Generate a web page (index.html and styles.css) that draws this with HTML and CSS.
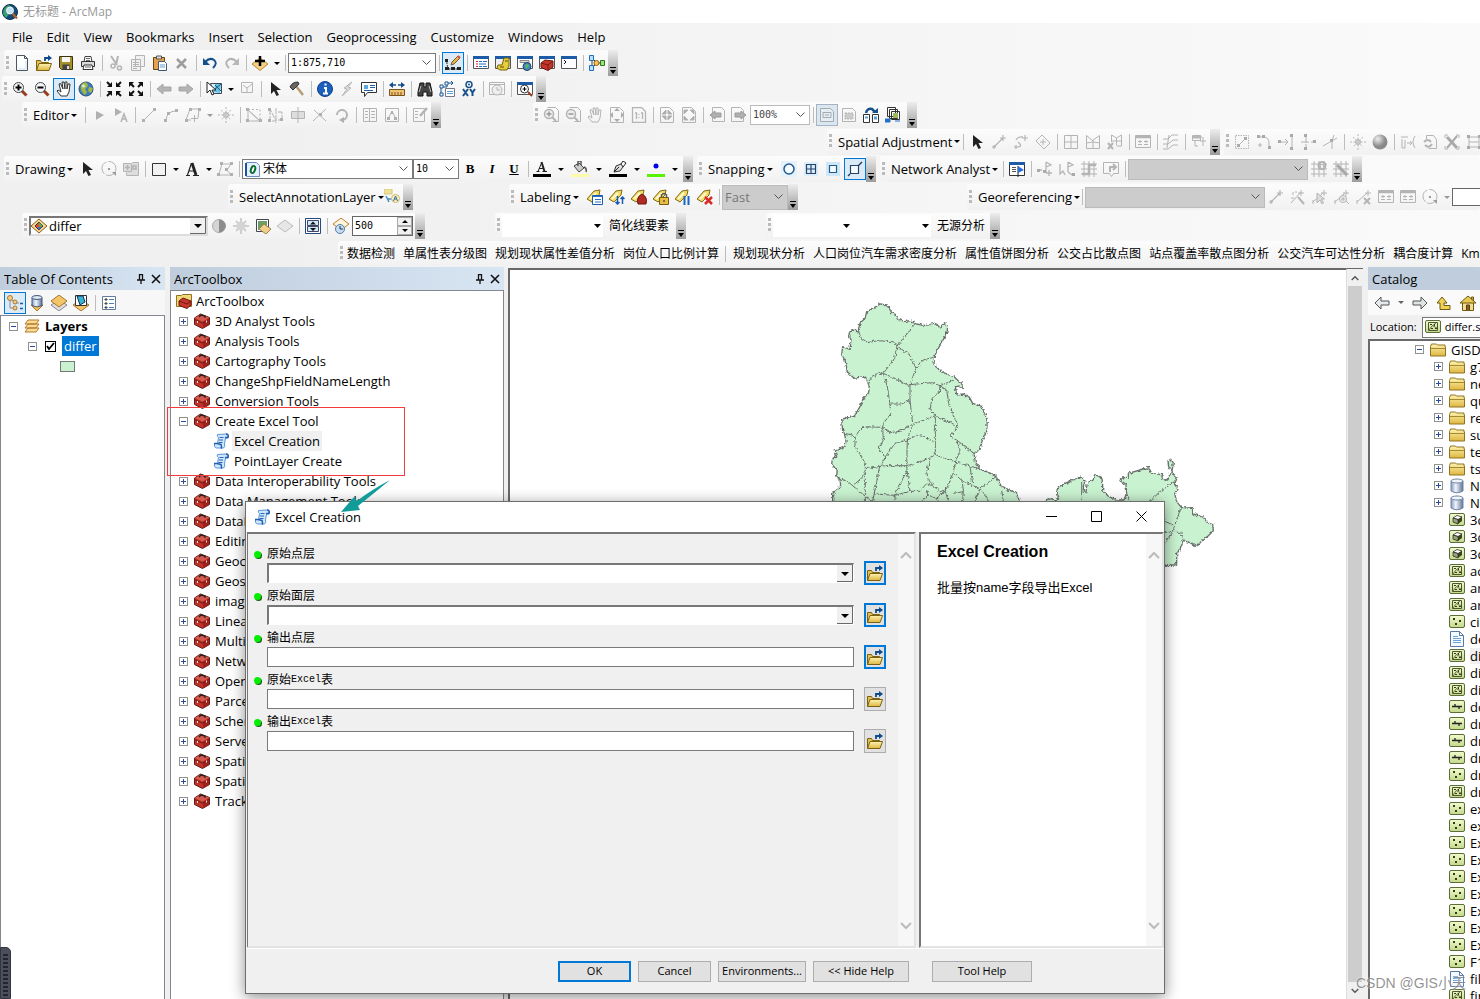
FILE: index.html
```html
<!DOCTYPE html>
<html lang="zh-CN">
<head>
<meta charset="utf-8">
<title>无标题 - ArcMap</title>
<link rel="stylesheet" href="styles.css">
</head>
<body>
<svg class="sprite" aria-hidden="true">
<defs>
<linearGradient id="gy" x2="0" y2="1"><stop stop-color="#fdf3b0"/><stop offset="1" stop-color="#dfb640"/></linearGradient>
<linearGradient id="gcyl"><stop stop-color="#7f9cc4"/><stop offset=".4" stop-color="#f1f6fc"/><stop offset="1" stop-color="#5c7299"/></linearGradient>
<linearGradient id="ggrn" x2="0" y2="1"><stop stop-color="#f3fbcf"/><stop offset="1" stop-color="#c3d98a"/></linearGradient>
<radialGradient id="gball" cx=".35" cy=".3"><stop stop-color="#eee"/><stop offset="1" stop-color="#8a8a8a"/></radialGradient>
<filter id="rough" x="-5%" y="-5%" width="110%" height="110%"><feTurbulence type="fractalNoise" baseFrequency=".12" numOctaves="2" seed="4"/><feDisplacementMap in="SourceGraphic" scale="12" xChannelSelector="R" yChannelSelector="G"/></filter>
</defs>
<symbol id="app" viewBox="0 0 16 16"><circle cx="8" cy="8" r="7.500" fill="#164a78" stroke="#0b2f52"/><path d="M1 10q0-7 6-9l3 2-2 6-4 5Z" fill="#3aa070" stroke="none"/><circle cx="8" cy="6.500" r="3.500" fill="#bfe3f5" stroke="#eef4f8"/><path d="m10.500 9.500 4.500 5" stroke="#b5622a" stroke-width="2.200"/></symbol>
<symbol id="new" viewBox="0 0 16 16"><path d="M2.500.5h8l3 3v12h-11Z" fill="#fdfeff" stroke="#4d5560"/><path d="M10.500.5v3h3" stroke="#4d5560"/><path d="M4 14h8V6" stroke="#cfe0f4"/></symbol>
<symbol id="open" viewBox="0 0 16 16"><path d="M.5 15.500V5.500h4l1 2h7v2" fill="#e2c052" stroke="#7a6212"/><path d="m.5 15.500 2.500-7h12.500l-2.500 7Z" fill="url(#gy)" stroke="#7a6212"/><path d="M9 6V3h4" stroke="#0c4a8c" stroke-width="1.800"/><path d="m12 0 4 3-4 3Z" fill="#0c4a8c" stroke="none"/></symbol>
<symbol id="save" viewBox="0 0 16 16"><path d="M1.500 1.500h13v13h-11l-2-2Z" fill="#a78f2c" stroke="#3b3410"/><path d="M4 2h8v5H4Z" fill="#f6f6f2" stroke="none"/><path d="M4.500 9.500h7v5h-7Z" fill="#444" stroke="none"/><path d="M9 11h2v3H9Z" fill="#ddd" stroke="none"/></symbol>
<symbol id="print" viewBox="0 0 16 16"><path d="M4 7 5 1.500h6L12 7" fill="#fff" stroke="#444"/><path d="M1.500 6.500h13v5h-13Z" fill="#d9d9d9" stroke="#333"/><path d="M4 10h8l1 4.500H3Z" fill="#fff" stroke="#333"/><path d="M6 3.500h4M6 5.500h4M5 12h6" stroke="#666"/></symbol>
<symbol id="cut" viewBox="0 0 16 16"><path d="m3 1 6 9M10 1 8 10" stroke-width="2"/><circle cx="5" cy="11" r="2" stroke-width="1.500"/><circle cx="11.500" cy="13" r="2" stroke-width="1.500"/></symbol>
<symbol id="copy" viewBox="0 0 16 16"><path d="M5.500.5h9v11h-9ZM1.500 4.500h9v11h-9Z" fill="#f0f0f0"/><path d="M3 7.500h6M3 9.500h6M3 11.500h6M3 13.500h4"/></symbol>
<symbol id="paste" viewBox="0 0 16 16"><path d="M1.500 2.500h11v12h-11Z" fill="#e6a34c" stroke="#6b4512"/><path d="M4.500 1h5v3h-5Z" fill="#ddd" stroke="#555"/><path d="M6.500 6.500h6l2 2v7h-8Z" fill="#fff" stroke="#3e5876"/><path d="M8 10h5M8 12h5" stroke="#5e98d0"/></symbol>
<symbol id="del" viewBox="0 0 16 16"><path d="m3 4 9 9M12 4l-9 9" stroke="#9c9c9c" stroke-width="2.500"/></symbol>
<symbol id="undo" viewBox="0 0 16 16"><path d="M3 7q5-5 9-2t-1 8" stroke="#14508c" stroke-width="2"/><path d="M1 3v7h7Z" fill="#14508c" stroke="none"/></symbol>
<symbol id="redo" viewBox="0 0 16 16"><path d="M13 7Q8 2 4 5t1 8" stroke-width="2"/><path d="M15 3v7H8Z" fill="#b8b8b8" stroke="none"/></symbol>
<symbol id="add" viewBox="0 0 16 16"><path d="m0 9 8-6 8 6-8 6.500Z" fill="#f3cf84" stroke="#b98a35"/><path d="M8 1v10M3 6h10" stroke="#000" stroke-width="2.500"/></symbol>
<symbol id="edtool" viewBox="0 0 16 16"><path d="M1.500 6q1 4 1 8h11" stroke="#222" stroke-dasharray="3 1"/><path d="M0 4h3v3H0ZM0 12h4v3H0ZM6 12h4v3H6ZM12 12h4v3h-4Z" fill="#222" stroke="none"/><path d="m6 10 1-3 6-6 2 2-6 6Z" fill="#e9b34b" stroke="#7b5a2b"/><path d="m13 1 2 2" stroke="#d0504a" stroke-width="2"/></symbol>
<symbol id="wlist" viewBox="0 0 16 16"><path d="M.5 1.500h15v12H.5Z" fill="#fff" stroke="#555"/><path d="M0 1h16v3H0Z" fill="#1c5ba5" stroke="none"/><path d="M3 6.500h2M3 9h2M3 11.500h2" stroke="#c22"/><path d="M6 6.500h3m1 0h4M6 9h7M6 11.500h3m1 0h4" stroke="#2471c8"/></symbol>
<symbol id="wcat" viewBox="0 0 16 16"><path d="M.5 1.500h15v12H.5Z" fill="#eee" stroke="#555"/><path d="M0 1h16v3H0Z" fill="#1c5ba5" stroke="none"/><path d="M9 3h5v8l-2 4H5l-3-2 1-3h4Z" fill="#e8cd3b" stroke="#74620e"/><path d="M10 6h3M5 12h4" stroke="#5b4d0a"/></symbol>
<symbol id="wglobe" viewBox="0 0 16 16"><path d="M.5 1.500h15v12H.5Z" fill="#fff" stroke="#555"/><path d="M0 1h16v3H0Z" fill="#1c5ba5" stroke="none"/><path d="M3 5.500h9v2H3Z" fill="#ddd" stroke="#888"/><circle cx="10" cy="11.500" r="4" fill="#3c86c9" stroke="#245"/><path d="m8 10 3-1 1 2-3 3Z" fill="#63b15d" stroke="none"/></symbol>
<symbol id="wbox" viewBox="0 0 16 16"><path d="M.5 1.500h15v12H.5Z" fill="#fff" stroke="#555"/><path d="M0 1h16v3H0Z" fill="#1c5ba5" stroke="none"/><path d="m2 8 4-3 8 1v6l-5 3.500-7-3Z" fill="#c3342b" stroke="#6c1512"/><path d="m2 8 7 2 5-4M9 10v5" stroke="#7a1a15"/></symbol>
<symbol id="wcmd" viewBox="0 0 16 16"><path d="M.5 1.500h15v12H.5Z" fill="#fdfdff" stroke="#555"/><path d="M0 1h16v3H0Z" fill="#1c5ba5" stroke="none"/><path d="m3 5 2 2-2 2" stroke="#111"/></symbol>
<symbol id="model" viewBox="0 0 16 16"><path d="M3 3v10M3 3l5 5M3 13l5-5h5" stroke="#345"/><path d="M.5.5h4v5h-4ZM.5 10.500h4v5h-4Z" fill="#bfe0fa" stroke="#1c6fc0"/><circle cx="7.500" cy="8" r="2.500" fill="#f7c65a" stroke="#96640e"/><path d="M11.500 5.500h4v5h-4Z" fill="#9adf80" stroke="#2c7a1c"/></symbol>
<symbol id="zin" viewBox="0 0 16 16"><path d="m10 10 4.500 4.500" stroke="#9a3b1f" stroke-width="3"/><circle cx="6.500" cy="6.500" r="5" fill="#f4f8fa" stroke="#444"/><path d="M3.500 6.500h6M6.500 3.500v6" stroke="#000" stroke-width="2"/></symbol>
<symbol id="zout" viewBox="0 0 16 16"><path d="m10 10 4.500 4.500" stroke="#9a3b1f" stroke-width="3"/><circle cx="6.500" cy="6.500" r="5" fill="#f4f8fa" stroke="#444"/><path d="M3.500 6.500h6" stroke="#000" stroke-width="2"/></symbol>
<symbol id="hand" viewBox="0 0 16 16"><path d="M5 15 1 10l1-1 3 2-2-8 1.500-.5L7 8 6 1h2l1 7V1h2v7l1-5h2l-1 8-2 4Z" fill="#fff" stroke="#333"/></symbol>
<symbol id="ghand" viewBox="0 0 16 16"><path d="M5 15 1 10l1-1 3 2-2-8 1.500-.5L7 8 6 1h2l1 7V1h2v7l1-5h2l-1 8-2 4Z"/></symbol>
<symbol id="globe" viewBox="0 0 16 16"><circle cx="8" cy="8" r="7" fill="#3f7dc0" stroke="#285080"/><path d="M3 4q3-4 6-2l1 3-3 3 2 3-2 3Q2 10 3 4ZM11 6l4 1-2 5-3-2Z" fill="#a6b93f" stroke="none"/><circle cx="5.500" cy="5" r="1.500" fill="#dce8f4" stroke="none"/></symbol>
<symbol id="shrink" viewBox="0 0 16 16"><path d="m1 1 4 4M15 1l-4 4M1 15l4-4M15 15l-4-4" stroke="currentColor" stroke-width="2"/><path d="M6 1v5H1ZM10 1v5h5ZM6 15v-5H1ZM10 15v-5h5Z" fill="currentColor" stroke="none"/></symbol>
<symbol id="grow" viewBox="0 0 16 16"><path d="m2 2 4 4M14 2l-4 4M2 14l4-4M14 14l-4-4" stroke="currentColor" stroke-width="2"/><path d="M1 6V1h5ZM15 6V1h-5ZM1 10v5h5ZM15 10v5h-5Z" fill="currentColor" stroke="none"/></symbol>
<symbol id="left" viewBox="0 0 16 16"><path d="m1 8 6-5v3h8v4H7v3Z" fill="#b4b4b4" stroke="#a5a5a5"/></symbol>
<symbol id="right" viewBox="0 0 16 16"><path d="M15 8 9 3v3H1v4h8v3Z" fill="#b4b4b4" stroke="#a5a5a5"/></symbol>
<symbol id="self" viewBox="0 0 16 16"><path d="M4.500 2.500h11v10h-8Z" fill="#d8f0fa" stroke="#445"/><path d="m9 3 6 0-1 9-6-1Z" fill="#5ec5e8" stroke="none"/><path d="m8 9 7-6M9 4l6 6" stroke="#29506a"/><path d="M1 1v11l3-3 2 5 2-1-2-4h4Z" fill="#fff" stroke="#222"/></symbol>
<symbol id="clr" viewBox="0 0 16 16"><path d="M2.500 1.500h11v10h-11ZM4 4l4 3 5-4M8 7v5"/></symbol>
<symbol id="ptr" viewBox="0 0 16 16"><path d="M4 1v12l3-3 2.500 5 2.500-1-2.500-5H14Z" fill="#222" stroke="none"/></symbol>
<symbol id="hammer" viewBox="0 0 16 16"><path d="m7 5 7 9" stroke="#b79b72" stroke-width="2.500"/><path d="M1 6q2-5 8-5l1 2-6 6Z" fill="#666" stroke="#333"/></symbol>
<symbol id="info" viewBox="0 0 16 16"><circle cx="8" cy="8" r="7.500" fill="#1d5fbd" stroke="#123f86"/><path d="M7 7h2v5M6 12.500h5M7.500 3.500h2" stroke="#fff" stroke-width="2"/></symbol>
<symbol id="bolt" viewBox="0 0 16 16"><path d="m13 1-8 6 3 1-5 7 9-8-3-1Z" fill="#ddd"/></symbol>
<symbol id="html" viewBox="0 0 16 16"><path d="M.5 1.500h15v10h-9l-3 4v-4h-3Z" fill="#fff" stroke="#333"/><path d="M3 4h4v4H3Z" fill="#5da8dc" stroke="none"/><path d="M9 4.500h5M9 6.500h5M3 9.500h9" stroke="#1d5fa5"/></symbol>
<symbol id="measure" viewBox="0 0 16 16"><path d="M.5 8.500h15v6H.5Z" fill="#f0c376" stroke="#7a5418"/><path d="M3 11v3M6 11v3M9 11v3M12 11v3" stroke="#7a5418"/><path d="M2 4h5M9 4h5" stroke="#154d8c" stroke-width="1.500"/><path d="M0 4 4 1v6ZM16 4l-4-3v6Z" fill="#154d8c" stroke="none"/></symbol>
<symbol id="find" viewBox="0 0 16 16"><path d="M3 2h4v4h2V2h4l2 9v4h-5v-4H6v4H1v-4Z" fill="#444" stroke="#111"/><path d="m4 5-2 6M12 5l2 6" stroke="#bbb"/></symbol>
<symbol id="route" viewBox="0 0 16 16"><path d="M2 13V6h6V2h6m-2-2 2 2-2 2" stroke="#1a568f"/><path d="M1 4h3v3H1ZM1 12h3v3H1ZM6 1h3v3H6Z" fill="#fff" stroke="#1a568f"/><path d="M6.500 7.500h9v8h-9Z" fill="#fff" stroke="#778"/><path d="M8 10.500h6M8 12.500h6" stroke="#5aa0d5"/></symbol>
<symbol id="xy" viewBox="0 0 16 16"><circle cx="8" cy="3.500" r="3" fill="#fff" stroke="#17508b" stroke-width="1.500"/><circle cx="8" cy="3.500" r="1" fill="#17508b" stroke="none"/><path d="m2 8 5 7M7 8l-5 7M9 8l2.500 3.500L14 8m-2.500 3v4" stroke="#17508b" stroke-width="2"/></symbol>
<symbol id="time" viewBox="0 0 16 16"><path d="M.5 1.500h15v12H.5ZM.5 3.500h15"/><circle cx="8" cy="9" r="5" fill="#eee"/><path d="M8 6v3h3"/></symbol>
<symbol id="view" viewBox="0 0 16 16"><path d="M.5 1.500h15v12H.5Z" fill="#fff" stroke="#555"/><path d="M0 1h16v3H0Z" fill="#1c5ba5" stroke="none"/><path d="m11 11 4 4" stroke="#9a3b1f" stroke-width="2"/><circle cx="7.500" cy="8" r="4" fill="#fff" stroke="#333"/><path d="M5.500 8h4M7.500 6v4" stroke="#000"/></symbol>
<symbol id="play" viewBox="0 0 16 16"><path d="m5 4 8 4-8 5Z" fill="#b0b0b0" stroke="none"/></symbol>
<symbol id="playa" viewBox="0 0 16 16"><path d="m2 1 7 4-7 4Z" fill="#b0b0b0" stroke="none"/><path d="m8 15 3-8 3 8m-5-3h4" stroke-width="1.500"/></symbol>
<symbol id="line" viewBox="0 0 16 16"><path d="M3 13 13 3"/><path d="M1 12h3v3H1ZM12 1h3v3h-3Z" fill="#b0b0b0" stroke="none"/></symbol>
<symbol id="arc" viewBox="0 0 16 16"><path d="M3 13q1-9 10-9"/><path d="M1 12h3v3H1ZM12 2h3v3h-3ZM4 5h3v3H4Z" fill="#b0b0b0" stroke="none"/></symbol>
<symbol id="poly" viewBox="0 0 16 16"><path d="M1 13 5 2h9l-1 9M1 13h5M9.500 8v7M6 11.500h7"/><path d="M0 12h3v3H0ZM4 1h3v3H4ZM13 1h3v3h-3Z" fill="#b0b0b0" stroke="none"/></symbol>
<symbol id="burst" viewBox="0 0 16 16"><path d="M8 0v16M0 8h16M3 3l10 10M13 3 3 13" stroke-dasharray="2 1.500"/><circle cx="8" cy="8" r="2.500" fill="#ccc"/></symbol>
<symbol id="vert" viewBox="0 0 16 16"><path d="M2 3v11h12ZM2 3l12 11"/><path d="M2 2.500h12V14" stroke-dasharray="2 2"/><path d="M0 1h3v3H0ZM0 12h3v3H0ZM13 12h3v3h-3Z" fill="#b0b0b0" stroke="none"/></symbol>
<symbol id="vert2" viewBox="0 0 16 16"><path d="M2 2v12h6ZM8 1v15M10 5h4v8h-4" stroke-dasharray="6 1"/><path d="M0 1h3v3H0ZM0 12h3v3H0ZM12 11h3v3h-3Z" fill="#b0b0b0" stroke="none"/></symbol>
<symbol id="split" viewBox="0 0 16 16"><path d="M1.500 4.500h13v7h-13ZM8 0v16" fill="#ddd"/></symbol>
<symbol id="cross" viewBox="0 0 16 16"><path d="M1 14 14 2M2 3l12 11"/><path d="M7 6h3v3H7Z" fill="#b0b0b0" stroke="none"/></symbol>
<symbol id="rot" viewBox="0 0 16 16"><path d="M3 8a5 5 0 1 1 6 5" stroke-width="2"/><path d="m5 13 5-3v6Z" fill="#b0b0b0" stroke="none"/></symbol>
<symbol id="table" viewBox="0 0 16 16"><path d="M1.500 1.500h13v13h-13ZM7.500 1v14M3 4.500h3M3 7.500h3M3 10.500h3M9 4.500h4M9 7.500h4M9 10.500h4"/></symbol>
<symbol id="sketch" viewBox="0 0 16 16"><path d="M1.500 1.500h13v13h-13ZM4 12l4-8 4 8"/><path d="M3 10h3v3H3ZM10 10h3v3h-3ZM7 4h2v3H7Z" fill="#b0b0b0" stroke="none"/></symbol>
<symbol id="form" viewBox="0 0 16 16"><path d="M1.500 1.500h11v13h-11ZM3 4.500h3M3 7.500h3M3 10.500h3"/><path d="m8 9 7-8" stroke-width="2.500"/></symbol>
<symbol id="pzin" viewBox="0 0 16 16"><path d="M4.500.5h8l3 3v11h-6"/><path d="m9 10 4 4" stroke-width="2"/><circle cx="6" cy="7" r="4.500" fill="#eee" stroke-width="1.500"/><path d="M3.500 7h5M6 4.500v5" stroke="#999" stroke-width="1.500"/></symbol>
<symbol id="pzout" viewBox="0 0 16 16"><path d="M4.500.5h8l3 3v11h-6"/><path d="m9 10 4 4" stroke-width="2"/><circle cx="6" cy="7" r="4.500" fill="#eee" stroke-width="1.500"/><path d="M3.500 7h5" stroke="#999" stroke-width="1.500"/></symbol>
<symbol id="pfull" viewBox="0 0 16 16"><path d="M1.500.5h9l4 4v11h-13Z"/><path d="m8 1 3 3H5ZM8 15l3-3H5ZM1 8l3-3v6ZM15 8l-3-3v6Z" fill="#aaa" stroke="none"/></symbol>
<symbol id="p11" viewBox="0 0 16 16"><path d="M1.500.5h9l4 4v11h-13ZM4 6h1.500v6M10 6h1.500v6M8 7v1M8 10v1" stroke-width="1.300"/></symbol>
<symbol id="pshr" viewBox="0 0 16 16"><path d="M1.500.5h9l4 4v11h-13Z"/><path d="M7 3v4H3ZM9 3v4h4ZM7 13V9H3ZM9 13V9h4Z" fill="#aaa"/></symbol>
<symbol id="pgrow" viewBox="0 0 16 16"><path d="M1.500.5h9l4 4v11h-13Z"/><path d="M3 7V3h4ZM13 7V3H9ZM3 9v4h4ZM13 9v4H9Z" fill="#aaa"/></symbol>
<symbol id="pleft" viewBox="0 0 16 16"><path d="M3.500.5h9l3 3v11h-12Z"/><path d="m1 8 5-4v2h6v4H6v2Z" fill="#b0b0b0" stroke="#999"/></symbol>
<symbol id="pright" viewBox="0 0 16 16"><path d="M.5.5h9l3 3v11H.5Z"/><path d="m15 8-5-4v2H4v4h6v2Z" fill="#b0b0b0" stroke="#999"/></symbol>
<symbol id="draft" viewBox="0 0 16 16"><path d="M1.500 1.500h10l3 3v10h-13Z" fill="#e6edf3" stroke="#a2aab2"/><path d="M4 5.500h8v5H4ZM6 8h4" stroke="#a2aab2"/></symbol>
<symbol id="focus" viewBox="0 0 16 16"><path d="M1.500 1.500h10l3 3v10h-13Z"/><path d="M4 6h8v6H4Z" fill="#ccc" stroke-dasharray="2 1"/></symbol>
<symbol id="swap" viewBox="0 0 16 16"><path d="M3 6q1-5 6-4l3 3" stroke="#17508b" stroke-width="2.500"/><path d="M9 6h6V1Z" fill="#17508b" stroke="none"/><path d="M.5 7.500h6v8h-6ZM9.500 7.500h6v8h-6Z" fill="#fff" stroke="#333"/><path d="M2 9.500h3v2H2ZM11 9.500h3v3h-3Z" fill="#5aa0d5" stroke="none"/></symbol>
<symbol id="pages" viewBox="0 0 16 16"><path d="M2.500.5h8v9h-8ZM4.500 2.500h8v9h-8ZM6.500 4.500h8v8h-8Z" fill="#fff" stroke="#333"/><path d="M8 6h5v5H8Z" fill="#9bb85c" stroke="none"/><path d="M0 12h5v3H0ZM10 14h5" fill="#2471c8" stroke="#2471c8"/></symbol>
<symbol id="link" viewBox="0 0 16 16"><path d="m3 13 9-9M9 4h6M12 1v6M1 13h4M3 11v4" stroke-width="1.200"/></symbol>
<symbol id="link2" viewBox="0 0 16 16"><path d="M3 13q8 0 2-5M9 4h6M12 1v6M1 13h4M3 11v4M3 6q2-4 7-3" stroke-width="1.200"/></symbol>
<symbol id="wand" viewBox="0 0 16 16"><path d="m1 14 10-11M8 4h6M11 1v6M3 3v3M1 9h3M6 2v2"/><path d="m8 8 6 7" stroke-width="2"/></symbol>
<symbol id="linkp" viewBox="0 0 16 16"><path d="m1 13 10-9M9 4h6M12 1v6M1 11v4"/><path d="M5 4v10l3-3 2 4 1.500-1-2-4h3Z" fill="#ddd"/></symbol>
<symbol id="linkz" viewBox="0 0 16 16"><path d="m1 13 10-9M9 4h6M12 1v6M1 11v4M12 12l3 3"/><circle cx="9" cy="10" r="3.500" fill="#eee"/><path d="M7 10h4M9 8v4"/></symbol>
<symbol id="linkx" viewBox="0 0 16 16"><path d="m1 13 10-9M9 4h6M12 1v6M1 11v4"/><path d="m8 9 6 6M14 9l-6 6" stroke-width="2"/></symbol>
<symbol id="diam" viewBox="0 0 16 16"><path d="m1 7 6-6 8 8-6 6ZM5 8h6M8 5v6"/></symbol>
<symbol id="grid4" viewBox="0 0 16 16"><path d="M1.500 1.500h13v13h-13ZM8 1v14M1 8h14"/></symbol>
<symbol id="grid5" viewBox="0 0 16 16"><path d="m1.500 1.500 6 5 7-5v13h-13ZM8 6v9M1 9l7-1 7 1"/></symbol>
<symbol id="gridx" viewBox="0 0 16 16"><path d="M4.500 8V1l5 3 5-3v11h-5M9.500 4v7M5 7h9"/><path d="m1 9 5 6M6 9l-5 6" stroke-width="2"/></symbol>
<symbol id="ltab" viewBox="0 0 16 16"><path d="M.5 1.500h15v12H.5Z"/><path d="M.5 3h15" stroke-width="2.500"/><path d="M3 7.500h4M9 7.500h4M3 10.500h4M9 10.500h4M5 6v3M11 6v3"/></symbol>
<symbol id="multi" viewBox="0 0 16 16"><path d="M0 5h5l4-4h6M0 10h5l5-4h5M0 15h5l5-4h5M6 1l-2 13"/></symbol>
<symbol id="attr" viewBox="0 0 16 16"><path d="M1.500 1.500h8v5h-8ZM4 7v5h3M12 3v9M9 7h6"/><path d="M2 2h8v2H2Z" fill="#bbb"/></symbol>
<symbol id="dash" viewBox="0 0 16 16"><path d="M1.500 1.500h13v13h-13Z" stroke-dasharray="1.500 1"/><path d="m4 12 8-8"/><path d="M3 10h3v3H3ZM10 3h3v3h-3Z" fill="#aaa" stroke="none"/></symbol>
<symbol id="fillet" viewBox="0 0 16 16"><path d="M2 3h5q6 0 6 6v5M4 9v4M2 11h4"/><path d="M1 1h3v3H1ZM12 12h3v3h-3ZM6 1h3v3H6Z" fill="#aaa" stroke="none"/></symbol>
<symbol id="ext" viewBox="0 0 16 16"><path d="M1 8h8M14 1v14M7 5l3 3-3 3"/><path d="M12 0h3v3h-3ZM12 13h3v3h-3ZM0 6h3v3H0Z" fill="#aaa" stroke="none"/></symbol>
<symbol id="trim" viewBox="0 0 16 16"><path d="M6 1v14M1 8h8m2 0h5" stroke-dasharray="8 1"/><path d="M4 0h3v3H4ZM4 13h3v3H4ZM13 6h3v3h-3Z" fill="#aaa" stroke="none"/></symbol>
<symbol id="inter" viewBox="0 0 16 16"><path d="M1 12 15 4M10 7v8M10 7l2-6"/><path d="M8 5h3v3H8Z" fill="#aaa" stroke="none"/></symbol>
<symbol id="ball" viewBox="0 0 16 16"><circle cx="8" cy="8" r="7.500" fill="url(#gball)" stroke="none"/></symbol>
<symbol id="align" viewBox="0 0 16 16"><path d="M1 3h7M2 5v9h3V6M7 9h5M10 7l2 2-2 2M15 2q-4 6 0 12"/></symbol>
<symbol id="repl" viewBox="0 0 16 16"><path d="M4.500 5V1.500h7l3 4v9h-8" /><path d="M2 8q4-4 7 0m1 2q-3 5-7 1" stroke-width="2"/></symbol>
<symbol id="tools" viewBox="0 0 16 16"><path d="m3 3 10 11" stroke="#aaa" stroke-width="3"/><path d="M13 2 3 14" stroke="#aaa" stroke-width="2"/><path d="M1 4V1h3M1 12v3h3M12 1h3v3M15 12v3h-3"/></symbol>
<symbol id="box4" viewBox="0 0 16 16"><path d="M3 3h10v10H3ZM3 8h10"/><path d="M1 1h3v3H1ZM1 12h3v3H1ZM12 1h3v3h-3ZM12 12h3v3h-3Z" fill="#aaa" stroke="none"/></symbol>
<symbol id="rotc" viewBox="0 0 16 16"><circle cx="8" cy="7.500" r="7" stroke-dasharray="14 2"/><path d="M7 7h2v2H7ZM11 11h4v4Z" fill="#999" stroke="none"/></symbol>
<symbol id="grp" viewBox="0 0 16 16"><path d="M.5 2.500h8v8h-8ZM9.500 1.500h6v13h-12v-3" fill="#ddd"/><path d="M2 6.500h5M4.500 4v5M10 5h3v3h-3Z" stroke-width="1.500"/></symbol>
<symbol id="rect" viewBox="0 0 16 16"><path d="M1.500 2.500h13v12h-13Z" fill="#f1f1f1" stroke="#333"/></symbol>
<symbol id="bigA" viewBox="0 0 16 16"><path d="m3.500 14 4-12M5 10h5" stroke="#222" stroke-width="1.200"/><path d="m8 2 4 12" stroke="#222" stroke-width="2.800"/><path d="M2 14.500h4M9 14.500h6" stroke="#222"/></symbol>
<symbol id="nodes" viewBox="0 0 16 16"><path d="M2 13 5 3h9l-4 6 4 5H2"/><path d="M0 12h3v3H0ZM3 1h3v3H3ZM13 1h3v3h-3ZM8 7h3v3H8ZM13 12h3v3h-3Z" fill="#b0b0b0" stroke="none"/></symbol>
<symbol id="fontf" viewBox="0 0 16 16"><path d="M1.500 1.500h10l3 3v11h-13Z" fill="#e4effb" stroke="#6a8ec4"/><ellipse cx="8" cy="8.500" rx="3" ry="4.500" fill="#0a6b30" stroke="none" transform="rotate(20 8 8.500)"/><ellipse cx="8" cy="8.500" rx="1" ry="3" fill="#fff" stroke="none" transform="rotate(20 8 8.500)"/><path d="M1 2v13" stroke="#1d4ea8" stroke-width="2"/></symbol>
<symbol id="cA" viewBox="0 0 18 16"><path d="M0 13h18v3H0Z" fill="#000" stroke="none"/><path d="M5 10.500 8.500 2M6 7.500h5M3.500 10.500h3M9.500 10.500h4.500" stroke="#222"/><path d="m8.500 1 3 9.500" stroke="#222" stroke-width="2"/></symbol>
<symbol id="cF" viewBox="0 0 18 16"><path d="M0 13h18v3H0Z" fill="#fdfba9" stroke="none"/><path d="m3 5 5-3 5 5-5 4Z" fill="#ccc" stroke="#444"/><path d="M7 5V0h3v4M13 6q3 1 2 5" stroke="#555" stroke-width="1.500"/></symbol>
<symbol id="cP" viewBox="0 0 18 16"><path d="M0 13h18v3H0Z" fill="#000" stroke="none"/><path d="m5 11 2-6 5-2 2 3-3 4Z" fill="#ddd" stroke="#333"/><path d="m5 11 5-5M12 3l2-3 3 2-3 4" stroke="#222"/></symbol>
<symbol id="cM" viewBox="0 0 18 16"><path d="M0 13h18v3H0Z" fill="#59f200" stroke="none"/><circle cx="9" cy="5" r="2.500" fill="#0000e8" stroke="none"/></symbol>
<symbol id="sc" viewBox="0 0 16 16"><path d="M0 0h16v16H0Z" fill="#e4f2fb" stroke="none"/><circle cx="8" cy="8" r="5" fill="#f5fbff" stroke="#24598c" stroke-width="1.500"/></symbol>
<symbol id="sg" viewBox="0 0 16 16"><path d="M1 1h14v14H1Z" fill="#dceefa" stroke="none"/><path d="M3.500 3.500h9v9h-9ZM8 3v10M3 8h10" stroke="#24446c" stroke-width="1.200"/></symbol>
<symbol id="ss" viewBox="0 0 16 16"><path d="M1 1h14v14H1Z" fill="#cfe8f8" stroke="none"/><path d="M4.500 4.500h7v7h-7Z" fill="#f5fbff" stroke="#24598c" stroke-width="1.200"/></symbol>
<symbol id="se" viewBox="0 0 16 16"><path d="M3.500 4.500h8v8h-8Z" fill="#f5fbff" stroke="#24446c" stroke-width="1.200"/><path d="m1 15 2-2m8-8 4-4" stroke="#24446c" stroke-width="1.500"/></symbol>
<symbol id="naw" viewBox="0 0 16 16"><path d="M.5 1.500h15v13H.5Z" fill="#fff" stroke="#333"/><path d="M0 1h16v3H0Z" fill="#1c5ba5" stroke="none"/><path d="M3 6.500h4M3 8.500h4M3 10.500h4" stroke="#555"/><path d="M9 5v11" stroke="#222"/><path d="m9 5 6 4-6 3Z" fill="#2a6ae0" stroke="none"/></symbol>
<symbol id="flag" viewBox="0 0 16 16"><path d="M1 9h4M9 1v11m0-11 5 3-5 2M9 12h6M12 9v6" stroke-width="1.300"/><path d="M0 8h3v3H0ZM6 9h3v3H6Z" fill="#aaa" stroke="none"/></symbol>
<symbol id="flagp" viewBox="0 0 16 16"><path d="M1 3v10l3-3 2 4M9 1v10m0-10 5 3-5 2M9 11l4 3" stroke-width="1.300"/><path d="M13 12h3v3h-3Z" fill="#aaa" stroke="none"/></symbol>
<symbol id="net" viewBox="0 0 16 16"><path d="M3 0v16M8 0v16M13 0v16M0 3h16M0 8h16M0 13h16"/><path d="M1 13h7V4h7" stroke-width="2.500"/></symbol>
<symbol id="neti" viewBox="0 0 16 16"><path d="M3 0v16M8 0v16M13 0v16M0 3h16M0 8h16M0 13h16"/><circle cx="11" cy="4.500" r="4" fill="#bbb" stroke="#aaa"/><path d="M11 4v3M11 2v1" stroke="#fff" stroke-width="1.500"/></symbol>
<symbol id="netw" viewBox="0 0 16 16"><path d="M3 0v16M8 0v16M13 0v16M0 3h16M0 8h16M0 13h16"/><path d="m4 4 10 10" stroke="#a8a8a8" stroke-width="3"/></symbol>
<symbol id="dir" viewBox="0 0 16 16"><path d="M.5 1.500h15v11h-5l-2 3-2-3h-6Z"/><path d="M7 11V6h5m-2-3 3 3-3 3" stroke-width="2"/></symbol>
<symbol id="anno" viewBox="0 0 16 16"><path d="M0 0h8v5H0Z" fill="#f1e29a" stroke="#d6c777"/><path d="m2 7 3 6M4 10h6" stroke="#4b8ec5" stroke-width="1.500"/><circle cx="11.500" cy="9.500" r="4" fill="#fbeeb8" stroke="#cdbd74"/><path d="m9.500 12 2-5 2 5m-3-2h2" stroke="#2c6fae"/></symbol>
<symbol id="tag" viewBox="0 0 16 16"><path d="m0 10 7-8 6-1-1 5-7 7Z" fill="#f3dc62" stroke="#7d6a1c"/><path d="m3 10 6-6" stroke="#fffbd5" stroke-width="2"/></symbol>
<symbol id="t1" viewBox="0 0 16 16"><use href="#tag"/><path d="M5.500 6.500h10v9h-10Z" fill="#fff" stroke="#1c5ba5"/><path d="M6 7.500h9M8 10.500h6M8 13h6" stroke="#2471c8"/></symbol>
<symbol id="t2" viewBox="0 0 16 16"><use href="#tag"/><path d="M8.500 7v8m-2-2 2 2 2-2M13.500 15V8m-2 2 2-2 2 2" stroke="#1559b5" stroke-width="1.500"/></symbol>
<symbol id="t3" viewBox="0 0 16 16"><use href="#tag"/><path d="M7 15q-2-7 4-10 6 3 4 10Z" fill="#b12a26" stroke="#6b1412"/></symbol>
<symbol id="t4" viewBox="0 0 16 16"><use href="#tag"/><path d="M8.500 9V6q2.500-3 5 0v3" stroke="#555" stroke-width="1.500"/><path d="M6.500 8.500h9v7h-9Z" fill="#e8bd45" stroke="#7a5b10"/><path d="M11 11v2" stroke="#222"/></symbol>
<symbol id="t5" viewBox="0 0 16 16"><use href="#tag"/><path d="M9.500 7v9M13.500 7v9" stroke="#1768c4" stroke-width="2"/></symbol>
<symbol id="t6" viewBox="0 0 16 16"><use href="#tag"/><path d="m8 8 7 7M15 8l-7 7" stroke="#d92a2a" stroke-width="2.500"/></symbol>
<symbol id="half" viewBox="0 0 16 16"><circle cx="8" cy="8" r="6.500" fill="#d5d5d5" stroke="#aaa"/><path d="M8 1.500a6.500 6.500 0 0 1 0 13Z" fill="#8c8c8c" stroke="none"/></symbol>
<symbol id="sun" viewBox="0 0 16 16"><path d="M8 0v16M0 8h16M3 3l10 10M13 3 3 13" stroke="#cfcfcf" stroke-width="2"/><circle cx="8" cy="8" r="4.500" fill="#d4d4d4" stroke="none"/></symbol>
<symbol id="swipe" viewBox="0 0 16 16"><path d="M1.500 1.500h12v12h-12Z" fill="#fff" stroke="#445"/><path d="M3 3h9v9H3Z" fill="#6c9e64" stroke="none"/><path d="m4 11 5-5 7 5-5 5Z" fill="#f0cf8c" stroke="#a6834a"/></symbol>
<symbol id="gdia" viewBox="0 0 16 16"><path d="m0 8 8-6 8 6-8 6Z" fill="#e6e6e6" stroke="#bbb"/></symbol>
<symbol id="cont" viewBox="0 0 16 16"><path d="M.5.5h15v15H.5Z" fill="#fff" stroke="#244a7c"/><path d="M2.500 2.500h11v5h-11ZM2.500 8.500h11v5h-11Z" fill="#cfeaf7" stroke="#446"/><path d="m8 3.500 3 3H5ZM8 13l3-3H5Z" fill="#111" stroke="none"/></symbol>
<symbol id="clk" viewBox="0 0 16 16"><path d="m0 6 8-6 8 6-8 6Z" fill="#fff4da" stroke="#b9813a"/><circle cx="7" cy="11" r="4.500" fill="#c6def3" stroke="#527eab"/><path d="M7 8v3h3" stroke="#234"/></symbol>
<symbol id="lay" viewBox="0 0 16 16"><path d="m0 8 8-7 8 7-8 7Z" fill="#f6d590" stroke="#8e5d1e"/><path d="m4 8 4-4 4 4-4 4Z" fill="#e6492d" stroke="#333"/><path d="m8 4 4 4-4 1Z" fill="#4fae60" stroke="none"/><path d="m7 9 4 0-3 3Z" fill="#3372c9" stroke="none"/></symbol>
<symbol id="ldraw" viewBox="0 0 16 16"><path d="M3 4v9h7M5 5l3 3h4" stroke="#889"/><circle cx="3" cy="3" r="2.500" fill="#f6cf83" stroke="#a87a30"/><circle cx="8" cy="7" r="2" fill="#f6cf83" stroke="#a87a30"/><circle cx="8" cy="13" r="2" fill="#f6cf83" stroke="#a87a30"/><path d="M13 8.500h3M13 13.500h3" stroke="#1c5ba5" stroke-width="1.500"/></symbol>
<symbol id="lsrc" viewBox="0 0 16 16"><path d="m2 10 6 6 6-6Z" fill="#f3c15c" stroke="#a8742a"/><path d="M3 2.500v8q5 3 10 0v-8q-5-3-10 0Z" fill="url(#gcyl)" stroke="#44587a"/><ellipse cx="8" cy="2.500" rx="5" ry="2" fill="#dde8f5" stroke="#44587a"/></symbol>
<symbol id="lvis" viewBox="0 0 16 16"><path d="m0 10 8 6 8-6-8-5Z" fill="#ddd" stroke="#888"/><path d="m0 6 8-6 8 6-8 6Z" fill="#f3c568" stroke="#a8742a"/></symbol>
<symbol id="lsel" viewBox="0 0 16 16"><path d="m0 10 8 6 8-6-8-5Z" fill="#f3c568" stroke="#a8742a"/><path d="M2.500.5h11v10h-11Z" fill="#fff" stroke="#333"/><path d="M4 1h6l2 6-5 3Z" fill="#36b4d8" stroke="#135"/></symbol>
<symbol id="lopt" viewBox="0 0 16 16"><path d="M1.500 1.500h13v13h-13Z" fill="#fff" stroke="#667b94"/><path d="M4 4h2v1H4ZM4 8h2v1H4ZM4 12h2v1H4Z" stroke="#333"/><path d="M8 4.500h5M8 8.500h5M8 12.500h5" stroke="#4b80b8"/></symbol>
<symbol id="layers" viewBox="0 0 16 16"><path d="m1 14 3-4h11l-3 4ZM1 10l3-4h11l-3 4ZM1 6l3-4h11l-3 4Z" fill="#fbdc97" stroke="#b3792b"/></symbol>
<symbol id="tbx" viewBox="0 0 16 16"><path d="m.5 5 6-4 9 3.500v7l-7 4-8-4Z" fill="#bf3229" stroke="#6d1813"/><path d="m1 5 7.500 3.500 6.500-4-8.500-3Z" fill="#d75b4f" stroke="none"/><path d="M9 10v5l6-3.500v-5Z" fill="#9c231d" stroke="none"/><path d="M.5 6.500l8 3.500 7-4" stroke="#721a15"/><path d="m5 4 2-2 4 1v2" stroke="#222" stroke-width="1.300"/><path d="M3.500 8v2M12.500 7.500v2" stroke="#f5ddd2"/></symbol>
<symbol id="tbf" viewBox="0 0 16 16"><path d="M.5 2.500h5l1-1h9v12H.5Z" fill="#f0d878" stroke="#8f7523"/><path d="m3 8 4-3 8 3v4l-4 3.500-8-3Z" fill="#c7352b" stroke="#6d1813"/><path d="m3 8 8 3 4-3" stroke="#721a15"/></symbol>
<symbol id="scr" viewBox="0 0 16 16"><path d="M4.500 1.500q-1 2 1 3l-1 6h-3q-1 4 2 4.500h7q2-1 1-4l1-6h2.500q1-4-2-4Z" fill="#cfe5fa" stroke="#5b96d8"/><path d="M13 1q3 0 2 3.500h-3M1 10.500h3l4 1q1 3 0 4" stroke="#2360b0" stroke-width="1.500"/><path d="M6.500 4.500h4M6 7h4M5.500 9.500h4" stroke="#2b68b5" stroke-width="1.200"/></symbol>
<symbol id="fold" viewBox="0 0 16 16"><path d="M.5 4.500 1.500 2h5l1 1h7.500v2h.5v9H.5Z" fill="url(#gy)" stroke="#8f7523"/><path d="M1 6.500h14" stroke="#a68a2e"/></symbol>
<symbol id="db" viewBox="0 0 16 16"><path d="M2 3v10q6 3.500 12 0V3Z" fill="url(#gcyl)" stroke="#7484a0"/><ellipse cx="8" cy="3" rx="6" ry="2" fill="#eef4fb" stroke="#7484a0"/></symbol>
<symbol id="grn" viewBox="0 0 16 16"><path d="M2 1.500h12q1.500 0 1.500 1.500v9q0 1.500-1.500 1.500H2Q.5 13.500.5 12V3Q.5 1.500 2 1.500Z" fill="url(#ggrn)" stroke="#5c6b3a"/></symbol>
<symbol id="d3" viewBox="0 0 16 16"><use href="#grn"/><path d="m4 6 4-2.500L13 5v4l-4 3-5-2Z" fill="#3c431f" stroke="none"/><path d="m4 6 4-2.500L13 5 9 7.500Z" fill="#fff" stroke="#222" stroke-width=".7"/><path d="M4 6v4l5 2V7.500Z" fill="#9aa47a" stroke="#222" stroke-width=".7"/></symbol>
<symbol id="pg" viewBox="0 0 16 16"><use href="#grn"/><path d="M3.500 3.500h9v8h-9Z" stroke="#4c562e"/><path d="M5 5h2v1H5ZM9 5h1v2H9ZM6 9h2v1H6ZM10 9h2v1h-2Z" fill="#333b1c" stroke="none"/><path d="m7 7 4-3M7 7l-3 4M8 7l4 2" stroke="#4c562e" stroke-width=".8"/></symbol>
<symbol id="pt" viewBox="0 0 16 16"><use href="#grn"/><path d="M4 4h2v2H4ZM10 6h2v2h-2ZM6 9h2v2H6Z" fill="#333b1c" stroke="none"/></symbol>
<symbol id="ln" viewBox="0 0 16 16"><use href="#grn"/><path d="M3 7.500h10M6 5v3M10 7v3" stroke="#222" stroke-width="1.300"/></symbol>
<symbol id="doc" viewBox="0 0 16 16"><path d="M1.500.5h9l4 4v11h-13Z" fill="#f4f9ff" stroke="#5877a3"/><path d="M10.500.5v4h4" stroke="#5877a3"/><path d="M4 5.500h5M4 7.500h8M4 9.500h8M4 11.500h8" stroke="#6aa4dc"/></symbol>
<symbol id="cl" viewBox="0 0 16 16"><path d="m1 8 6-6v4h8v4H7v4Z" fill="#e4e8ec" stroke="#555"/></symbol>
<symbol id="cr" viewBox="0 0 16 16"><path d="M15 8 9 2v4H1v4h8v4Z" fill="#dfe5e0" stroke="#555"/></symbol>
<symbol id="up" viewBox="0 0 16 16"><path d="M6 2 1 8h3v6.500h10v-4H8V8h3Z" fill="#f0d254" stroke="#6e5a10"/></symbol>
<symbol id="home" viewBox="0 0 16 16"><path d="M11.500 2h2v4h-2Z" fill="#c9a94a" stroke="#6e5a10"/><path d="M2.500 8v7.500h11V8" fill="#f0dd95" stroke="#6e5a10"/><path d="m0 8 8-7 8 7Z" fill="#e8c84e" stroke="#6e5a10"/><path d="M6.500 15v-5h3v5" fill="#885f22" stroke="#5a4010"/></symbol>
<symbol id="pin" viewBox="0 0 10 10"><path d="M3 .5h4M3.500 0v6M6.500 0v6M1 6h8M5 6v4" stroke="#111" stroke-width="1.300"/></symbol>
<symbol id="x" viewBox="0 0 10 10"><path d="m1 1 8 8M9 1 1 9" stroke="#111" stroke-width="1.600"/></symbol>
<symbol id="cup" viewBox="0 0 12 8"><path d="m1 7 5-5 5 5" stroke="currentColor" stroke-width="2"/></symbol>
<symbol id="cdn" viewBox="0 0 12 8"><path d="m1 1 5 5 5-5" stroke="currentColor" stroke-width="2"/></symbol>
</svg>

<div class="app">
<header class="bars">
<div class="title"><svg class="i"><use href="#app"/></svg><span>无标题 - ArcMap</span></div>
<nav class="menu"><button>File</button><button>Edit</button><button>View</button><button>Bookmarks</button><button>Insert</button><button>Selection</button><button>Geoprocessing</button><button>Customize</button><button>Windows</button><button>Help</button></nav>

<div class="row">
<div class="tb m4"><i class="gr"></i><button class="b" aria-label="New"><svg class="i"><use href="#new"/></svg></button><button class="b" aria-label="Open"><svg class="i"><use href="#open"/></svg></button><button class="b" aria-label="Save"><svg class="i"><use href="#save"/></svg></button><button class="b" aria-label="Print"><svg class="i"><use href="#print"/></svg></button><i class="s"></i><button class="b" aria-label="Cut"><svg class="i"><use href="#cut"/></svg></button><button class="b" aria-label="Copy"><svg class="i"><use href="#copy"/></svg></button><button class="b" aria-label="Paste"><svg class="i"><use href="#paste"/></svg></button><button class="b" aria-label="Delete"><svg class="i"><use href="#del"/></svg></button><i class="s"></i><button class="b" aria-label="Undo"><svg class="i"><use href="#undo"/></svg></button><button class="b" aria-label="Redo"><svg class="i"><use href="#redo"/></svg></button><i class="s"></i><button class="b" aria-label="Add Data"><svg class="i"><use href="#add"/></svg></button><i class="c"></i><i class="s"></i><select class="sel mono w148" aria-label="Scale"><option>1:875,710</option></select><i class="s"></i><button class="b on" aria-label="Editor Toolbar"><svg class="i"><use href="#edtool"/></svg></button><i class="s"></i><button class="b" aria-label="Table Of Contents"><svg class="i"><use href="#wlist"/></svg></button><button class="b" aria-label="Catalog"><svg class="i"><use href="#wcat"/></svg></button><button class="b" aria-label="Search"><svg class="i"><use href="#wglobe"/></svg></button><button class="b" aria-label="ArcToolbox"><svg class="i"><use href="#wbox"/></svg></button><button class="b" aria-label="Python"><svg class="i"><use href="#wcmd"/></svg></button><i class="s"></i><button class="b" aria-label="ModelBuilder"><svg class="i"><use href="#model"/></svg></button><button class="ov" aria-label="Options"></button></div>
</div>

<div class="row">
<div class="tb m2"><i class="gr"></i><button class="b" aria-label="Zoom In"><svg class="i"><use href="#zin"/></svg></button><button class="b" aria-label="Zoom Out"><svg class="i"><use href="#zout"/></svg></button><button class="b on" aria-label="Pan"><svg class="i"><use href="#hand"/></svg></button><button class="b" aria-label="Full Extent"><svg class="i"><use href="#globe"/></svg></button><i class="s"></i><button class="b k" aria-label="Fixed Zoom In"><svg class="i"><use href="#shrink"/></svg></button><button class="b k" aria-label="Fixed Zoom Out"><svg class="i"><use href="#grow"/></svg></button><i class="s"></i><button class="b" aria-label="Back"><svg class="i"><use href="#left"/></svg></button><button class="b" aria-label="Forward"><svg class="i"><use href="#right"/></svg></button><i class="s"></i><button class="b" aria-label="Select Features"><svg class="i"><use href="#self"/></svg></button><i class="c"></i><button class="b" aria-label="Clear Selection"><svg class="i"><use href="#clr"/></svg></button><i class="s"></i><button class="b" aria-label="Select Elements"><svg class="i"><use href="#ptr"/></svg></button><button class="b" aria-label="Build"><svg class="i"><use href="#hammer"/></svg></button><i class="s"></i><button class="b" aria-label="Identify"><svg class="i"><use href="#info"/></svg></button><button class="b" aria-label="Hyperlink"><svg class="i"><use href="#bolt"/></svg></button><button class="b" aria-label="HTML Popup"><svg class="i"><use href="#html"/></svg></button><i class="s"></i><button class="b" aria-label="Measure"><svg class="i"><use href="#measure"/></svg></button><i class="s"></i><button class="b" aria-label="Find"><svg class="i"><use href="#find"/></svg></button><button class="b" aria-label="Find Route"><svg class="i"><use href="#route"/></svg></button><button class="b" aria-label="Go To XY"><svg class="i"><use href="#xy"/></svg></button><i class="s"></i><button class="b" aria-label="Time Slider"><svg class="i"><use href="#time"/></svg></button><i class="s"></i><button class="b" aria-label="Viewer"><svg class="i"><use href="#view"/></svg></button><button class="ov" aria-label="Options"></button></div>
</div>

<div class="row">
<div class="tb m22 w419"><i class="gr"></i><button class="t">Editor<i class="dn"></i></button><i class="s"></i><button class="b" aria-label="Edit"><svg class="i"><use href="#play"/></svg></button><button class="b" aria-label="Edit Annotation"><svg class="i"><use href="#playa"/></svg></button><i class="s"></i><button class="b" aria-label="Straight"><svg class="i"><use href="#line"/></svg></button><button class="b" aria-label="Arc"><svg class="i"><use href="#arc"/></svg></button><button class="b" aria-label="Trace"><svg class="i"><use href="#poly"/></svg></button><i class="c off"></i><button class="b" aria-label="Point"><svg class="i"><use href="#burst"/></svg></button><i class="s"></i><button class="b" aria-label="Edit Vertices"><svg class="i"><use href="#vert"/></svg></button><button class="b" aria-label="Reshape"><svg class="i"><use href="#vert2"/></svg></button><button class="b" aria-label="Cut Polygons"><svg class="i"><use href="#split"/></svg></button><button class="b" aria-label="Split"><svg class="i"><use href="#cross"/></svg></button><button class="b" aria-label="Rotate"><svg class="i"><use href="#rot"/></svg></button><i class="s"></i><button class="b" aria-label="Attributes"><svg class="i"><use href="#table"/></svg></button><button class="b" aria-label="Sketch Properties"><svg class="i"><use href="#sketch"/></svg></button><i class="s"></i><button class="b" aria-label="Create Features"><svg class="i"><use href="#form"/></svg></button><button class="ov" aria-label="Options"></button></div>
<div class="tb m92 w384"><i class="gr"></i><button class="b" aria-label="Page Zoom In"><svg class="i"><use href="#pzin"/></svg></button><button class="b" aria-label="Page Zoom Out"><svg class="i"><use href="#pzout"/></svg></button><button class="b" aria-label="Page Pan"><svg class="i"><use href="#ghand"/></svg></button><button class="b" aria-label="Whole Page"><svg class="i"><use href="#pfull"/></svg></button><button class="b" aria-label="100 Percent"><svg class="i"><use href="#p11"/></svg></button><i class="s"></i><button class="b" aria-label="Page Fixed Zoom In"><svg class="i"><use href="#pshr"/></svg></button><button class="b" aria-label="Page Fixed Zoom Out"><svg class="i"><use href="#pgrow"/></svg></button><i class="s"></i><button class="b" aria-label="Page Back"><svg class="i"><use href="#pleft"/></svg></button><button class="b" aria-label="Page Forward"><svg class="i"><use href="#pright"/></svg></button><select class="sel mono w60 lite" aria-label="Page zoom"><option>100%</option></select><i class="s"></i><button class="b ong" aria-label="Draft Mode"><svg class="i"><use href="#draft"/></svg></button><button class="b" aria-label="Focus Data Frame"><svg class="i"><use href="#focus"/></svg></button><button class="b" aria-label="Change Layout"><svg class="i"><use href="#swap"/></svg></button><button class="b" aria-label="Data Driven Pages"><svg class="i"><use href="#pages"/></svg></button><button class="ov" aria-label="Options"></button></div>
</div>

<div class="row">
<div class="tb m827 w393"><i class="gr"></i><button class="t">Spatial Adjustment<i class="dn"></i></button><i class="s"></i><button class="b" aria-label="Select"><svg class="i"><use href="#ptr"/></svg></button><button class="b" aria-label="New Link"><svg class="i"><use href="#link"/></svg></button><button class="b" aria-label="Modify Link"><svg class="i"><use href="#link2"/></svg></button><button class="b" aria-label="Multiple Links"><svg class="i"><use href="#diam"/></svg></button><i class="s"></i><button class="b" aria-label="Grid"><svg class="i"><use href="#grid4"/></svg></button><button class="b" aria-label="Limited Area"><svg class="i"><use href="#grid5"/></svg></button><button class="b" aria-label="Clear Area"><svg class="i"><use href="#gridx"/></svg></button><i class="s"></i><button class="b" aria-label="Link Table"><svg class="i"><use href="#ltab"/></svg></button><i class="s"></i><button class="b" aria-label="Edge Match"><svg class="i"><use href="#multi"/></svg></button><i class="s"></i><button class="b" aria-label="Attribute Transfer"><svg class="i"><use href="#attr"/></svg></button><button class="ov" aria-label="Options"></button></div>
<div class="tb m4 rest"><i class="gr"></i><button class="b" aria-label="Copy Features"><svg class="i"><use href="#dash"/></svg></button><button class="b" aria-label="Fillet"><svg class="i"><use href="#fillet"/></svg></button><button class="b" aria-label="Extend"><svg class="i"><use href="#ext"/></svg></button><button class="b" aria-label="Trim"><svg class="i"><use href="#trim"/></svg></button><button class="b" aria-label="Intersect"><svg class="i"><use href="#inter"/></svg></button><i class="s"></i><button class="b" aria-label="Explode"><svg class="i"><use href="#burst"/></svg></button><button class="b" aria-label="Generalize"><svg class="i"><use href="#ball"/></svg></button><i class="s"></i><button class="b" aria-label="Align"><svg class="i"><use href="#align"/></svg></button><button class="b" aria-label="Replace"><svg class="i"><use href="#repl"/></svg></button><button class="b" aria-label="Tools"><svg class="i"><use href="#tools"/></svg></button><button class="b" aria-label="Rectangle"><svg class="i"><use href="#box4"/></svg></button></div>
</div>

<div class="row">
<div class="tb m4 w689"><i class="gr"></i><button class="t">Drawing<i class="dn"></i></button><button class="b" aria-label="Select Elements"><svg class="i"><use href="#ptr"/></svg></button><button class="b" aria-label="Rotate"><svg class="i"><use href="#rotc"/></svg></button><button class="b" aria-label="Group"><svg class="i"><use href="#grp"/></svg></button><i class="s"></i><button class="b" aria-label="Rectangle"><svg class="i"><use href="#rect"/></svg></button><i class="c"></i><button class="b" aria-label="Text"><svg class="i"><use href="#bigA"/></svg></button><i class="c"></i><button class="b" aria-label="Edit Vertices"><svg class="i"><use href="#nodes"/></svg></button><i class="s"></i><label class="icosel w171"><svg class="i"><use href="#fontf"/></svg><select class="sel bare" aria-label="Font"><option>宋体</option></select></label><select class="sel mono w46" aria-label="Size"><option>10</option></select><button class="b fmt">B</button><button class="b fmt it">I</button><button class="b fmt un">U</button><i class="s"></i><button class="b" aria-label="Font Color"><svg class="i w"><use href="#cA"/></svg></button><i class="c c16"></i><button class="b" aria-label="Fill Color"><svg class="i w"><use href="#cF"/></svg></button><i class="c c16"></i><button class="b" aria-label="Line Color"><svg class="i w"><use href="#cP"/></svg></button><i class="c c16"></i><button class="b" aria-label="Marker Color"><svg class="i w"><use href="#cM"/></svg></button><i class="c c16"></i><button class="ov" aria-label="Options"></button></div>
<div class="tb m4 w179"><i class="gr"></i><button class="t">Snapping<i class="dn"></i></button><button class="b" aria-label="Point Snapping"><svg class="i"><use href="#sc"/></svg></button><button class="b" aria-label="End Snapping"><svg class="i"><use href="#sg"/></svg></button><button class="b" aria-label="Vertex Snapping"><svg class="i"><use href="#ss"/></svg></button><button class="b on" aria-label="Edge Snapping"><svg class="i"><use href="#se"/></svg></button><button class="ov" aria-label="Options"></button></div>
<div class="tb m4 w482"><i class="gr"></i><button class="t">Network Analyst<i class="dn"></i></button><i class="s"></i><button class="b" aria-label="Analyst Window"><svg class="i"><use href="#naw"/></svg></button><i class="s"></i><button class="b" aria-label="Create Location"><svg class="i"><use href="#flag"/></svg></button><button class="b" aria-label="Move Location"><svg class="i"><use href="#flagp"/></svg></button><button class="b" aria-label="Solve"><svg class="i"><use href="#net"/></svg></button><button class="b" aria-label="Directions"><svg class="i"><use href="#dir"/></svg></button><i class="s"></i><select class="sel w180 dis" disabled aria-label="Network dataset"><option></option></select><button class="b" aria-label="Network Identify"><svg class="i"><use href="#neti"/></svg></button><button class="b" aria-label="Build Network"><svg class="i"><use href="#netw"/></svg></button><button class="ov" aria-label="Options"></button></div>
</div>

<div class="row">
<div class="tb m228 w185"><i class="gr"></i><button class="t">SelectAnnotationLayer<i class="dn"></i></button><button class="b" aria-label="Annotation"><svg class="i"><use href="#anno"/></svg></button><button class="ov" aria-label="Options"></button></div>
<div class="tb m96 w288"><i class="gr"></i><button class="t">Labeling<i class="dn"></i></button><button class="b" aria-label="Label Manager"><svg class="i"><use href="#t1"/></svg></button><button class="b" aria-label="Label Priority"><svg class="i"><use href="#t2"/></svg></button><button class="b" aria-label="Label Weight"><svg class="i"><use href="#t3"/></svg></button><button class="b" aria-label="Lock Labels"><svg class="i"><use href="#t4"/></svg></button><button class="b" aria-label="Pause Labeling"><svg class="i"><use href="#t5"/></svg></button><button class="b" aria-label="Unplaced Labels"><svg class="i"><use href="#t6"/></svg></button><i class="s"></i><select class="sel w66 dis" disabled aria-label="Placement quality"><option>Fast</option></select><button class="ov" aria-label="Options"></button></div>
<div class="tb m169 rest"><i class="gr"></i><button class="t w105">Georeferencing<i class="dn"></i></button><i class="s"></i><select class="sel w180 dis" disabled aria-label="Raster layer"><option></option></select><button class="b" aria-label="Add Control Points"><svg class="i"><use href="#link"/></svg></button><button class="b" aria-label="Auto Registration"><svg class="i"><use href="#wand"/></svg></button><button class="b" aria-label="Select Link"><svg class="i"><use href="#linkp"/></svg></button><button class="b" aria-label="Zoom To Link"><svg class="i"><use href="#linkz"/></svg></button><button class="b" aria-label="Delete Link"><svg class="i"><use href="#linkx"/></svg></button><button class="b" aria-label="Viewer"><svg class="i"><use href="#ltab"/></svg></button><button class="b" aria-label="Link Table"><svg class="i"><use href="#ltab"/></svg></button><button class="b" aria-label="Rotate"><svg class="i"><use href="#rotc"/></svg></button><i class="c off"></i><input class="txt" aria-label="Angle"></div>
</div>

<div class="row">
<div class="tb m22 w403"><i class="gr"></i><label class="icosel old"><svg class="i"><use href="#lay"/></svg><select class="sel bare olds" aria-label="Effects layer"><option>differ</option></select></label><button class="b" aria-label="Contrast"><svg class="i"><use href="#half"/></svg></button><button class="b" aria-label="Brightness"><svg class="i"><use href="#sun"/></svg></button><button class="b" aria-label="Transparency"><svg class="i"><use href="#swipe"/></svg></button><button class="b" aria-label="Dim"><svg class="i"><use href="#gdia"/></svg></button><i class="s"></i><button class="b" aria-label="Swipe"><svg class="i"><use href="#cont"/></svg></button><i class="s"></i><button class="b" aria-label="Flicker"><svg class="i"><use href="#clk"/></svg></button><input class="txt mono spin" value="500" aria-label="Flicker rate"><span class="spb"><button aria-label="Increase"><i class="dn upw"></i></button><button aria-label="Decrease"><i class="dn"></i></button></span><button class="ov" aria-label="Options"></button></div>
<div class="tb m70 w191"><i class="gr"></i><select class="sel flat w101" aria-label="线要素"><option></option></select><button class="t cn">简化线要素</button><button class="ov" aria-label="Options"></button></div>
<div class="tb m80 w234"><i class="gr"></i><select class="sel flat w80" aria-label="源图层"><option></option></select><select class="sel flat w80" aria-label="目标图层"><option></option></select><button class="t cn">无源分析</button><button class="ov" aria-label="Options"></button></div>
</div>

<div class="row">
<div class="tb m338 rest"><i class="gr"></i><div class="links"><button>数据检测</button><button>单属性表分级图</button><button>规划现状属性差值分析</button><button>岗位人口比例计算</button><i class="bar"></i><button>规划现状分析</button><button>人口岗位汽车需求密度分析</button><button>属性值饼图分析</button><button>公交占比散点图</button><button>站点覆盖率散点图分析</button><button>公交汽车可达性分析</button><button>耦合度计算</button><button>Km</button></div></div>
</div>
</header>

<main class="work">
<section class="panel toc">
<h2 class="ph">Table Of Contents<svg class="p"><use href="#pin"/></svg><svg class="p"><use href="#x"/></svg></h2>
<div class="ptools"><button class="b on" aria-label="List By Drawing Order"><svg class="i"><use href="#ldraw"/></svg></button><button class="b" aria-label="List By Source"><svg class="i"><use href="#lsrc"/></svg></button><button class="b" aria-label="List By Visibility"><svg class="i"><use href="#lvis"/></svg></button><button class="b" aria-label="List By Selection"><svg class="i"><use href="#lsel"/></svg></button><i class="s"></i><button class="b" aria-label="Options"><svg class="i"><use href="#lopt"/></svg></button></div>
<ul class="tree list">
<li class="l0"><i class="ex mi"></i><svg class="i"><use href="#layers"/></svg><b>Layers</b></li>
<li class="l1"><i class="ex mi"></i><label><input type="checkbox" checked><span class="seld">differ</span></label></li>
<li class="l2"><i class="swatch"></i></li>
</ul>
</section>

<section class="panel box">
<h2 class="ph">ArcToolbox<svg class="p"><use href="#pin"/></svg><svg class="p"><use href="#x"/></svg></h2>
<ul class="tree list tools">
<li class="r0"><svg class="i"><use href="#tbf"/></svg>ArcToolbox</li>
<li><i class="ex"></i><svg class="i"><use href="#tbx"/></svg>3D Analyst Tools</li>
<li><i class="ex"></i><svg class="i"><use href="#tbx"/></svg>Analysis Tools</li>
<li><i class="ex"></i><svg class="i"><use href="#tbx"/></svg>Cartography Tools</li>
<li><i class="ex"></i><svg class="i"><use href="#tbx"/></svg>ChangeShpFieldNameLength</li>
<li><i class="ex"></i><svg class="i"><use href="#tbx"/></svg>Conversion Tools</li>
<li><i class="ex mi"></i><svg class="i"><use href="#tbx"/></svg>Create Excel Tool</li>
<li class="r2"><svg class="i"><use href="#scr"/></svg><span class="hov">Excel Creation</span></li>
<li class="r2"><svg class="i"><use href="#scr"/></svg>PointLayer Create</li>
<li><i class="ex"></i><svg class="i"><use href="#tbx"/></svg>Data Interoperability Tools</li>
<li><i class="ex"></i><svg class="i"><use href="#tbx"/></svg>Data Management Tools</li>
<li><i class="ex"></i><svg class="i"><use href="#tbx"/></svg>DataF</li>
<li><i class="ex"></i><svg class="i"><use href="#tbx"/></svg>Editin</li>
<li><i class="ex"></i><svg class="i"><use href="#tbx"/></svg>Geoc</li>
<li><i class="ex"></i><svg class="i"><use href="#tbx"/></svg>Geos</li>
<li><i class="ex"></i><svg class="i"><use href="#tbx"/></svg>imag</li>
<li><i class="ex"></i><svg class="i"><use href="#tbx"/></svg>Linea</li>
<li><i class="ex"></i><svg class="i"><use href="#tbx"/></svg>Multi</li>
<li><i class="ex"></i><svg class="i"><use href="#tbx"/></svg>Netw</li>
<li><i class="ex"></i><svg class="i"><use href="#tbx"/></svg>Open</li>
<li><i class="ex"></i><svg class="i"><use href="#tbx"/></svg>Parce</li>
<li><i class="ex"></i><svg class="i"><use href="#tbx"/></svg>Scher</li>
<li><i class="ex"></i><svg class="i"><use href="#tbx"/></svg>Serve</li>
<li><i class="ex"></i><svg class="i"><use href="#tbx"/></svg>Spati</li>
<li><i class="ex"></i><svg class="i"><use href="#tbx"/></svg>Spati</li>
<li><i class="ex"></i><svg class="i"><use href="#tbx"/></svg>Track</li>
</ul>
</section>

<section class="map">
<svg class="mapsvg" viewBox="-870 -60 2508 2187" preserveAspectRatio="xMinYMin slice">
<g filter="url(#rough)" fill="#c9f2d0" stroke="#6b716d" stroke-width="4" stroke-linejoin="round">
<path d="M98 700V610L122 590 120 567 108 560 112 543 95 522 97 508 110 500 105 483 135 470 138 452 133 430 128 425 125 388 145 382 165 375 180 350 190 325 205 310 208 290 200 268 190 260 162 265 142 245 135 210 125 195 128 170 150 178 153 150 147 132 152 120 174 122 180 100 195 85 200 65 218 56 240 42 262 45 275 68 285 72 292 86 312 95 330 92 349 102 375 107 390 104 402 99 412 104 420 114 430 100 444 106 440 130 415 175 403 200 402 226 430 248 462 260 475 272 485 280 487 292 476 288 466 290 470 315 490 312 510 325 518 340 545 349 553 370 562 388 560 425 547 450 538 480 522 490 526 515 540 537 572 550 588 560 602 585 625 600 650 608 658 634 660 700Z"/>
<path d="M735 640 740 628 760 626 768 634 776 620 770 605 773 592 800 578 820 570 838 560 855 572 850 590 850 606 858 606 862 580 880 566 884 554 905 562 908 580 908 600 924 618 950 630 972 630 980 608 978 585 960 572 962 564 985 562 985 550 1020 540 1046 532 1055 550 1085 554 1088 568 1100 570 1112 550 1114 543 1106 530 1104 514 1112 508 1120 518 1116 543 1130 570 1122 580 1134 598 1124 610 1130 635 1144 652 1180 656 1180 672 1210 682 1222 698 1238 704 1240 722 1222 740 1208 750 1190 770 1170 758 1150 752 1140 780 1130 790 1130 824 1095 828 1050 760 735 740Z"/>
<g fill="none" stroke-width="3">
<path d="M174 122 184 145 204 158 230 152 280 155 291 168 345 102M291 168 284 205 250 250 236 250 216 262 205 275M291 168 330 195 348 235 366 210 402 202M348 235 330 284 325 286 290 268 250 250M250 250 262 290 270 342 305 342 330 330 330 284 395 278 420 287 462 270M330 330 338 403 406 377 420 385 474 408 456 365 446 340 440 300 420 287 418 305 396 325 390 360 406 377 406 495"/>
<path d="M270 342 272 372 250 400 248 412 190 410 175 425 165 448 165 470 196 520 196 634M248 412 270 428 300 424 338 403 322 450 320 527 256 527 196 536M248 412 250 450 236 478 256 500 285 460 322 450 350 436 375 440 406 458M133 430 158 435 165 448M256 500 245 525M474 408 450 440 470 450 480 480 467 516 406 495 360 516 320 527 322 548 330 604 360 604 380 580 410 595 420 604 436 604 460 548 467 516 510 528 540 537M470 450 522 490M390 505 380 545 385 570 410 595M120 567 140 572 214 634M196 545 180 570 160 584M240 527 230 575 218 634M225 612 285 616 330 604M322 542 300 580 285 616 285 634M460 548 486 572 540 596 588 560M486 572 490 600 488 634M510 530 518 580M540 596 560 620 565 634M540 596 525 634M436 604 445 634M380 600 384 615 366 634M384 615 410 625 436 604M410 625 415 634M605 600 610 634M460 610 490 605"/>
<path d="M845 575V634M1116 580 1080 605 1050 634M980 610 990 634M1142 655 1130 690 1118 727 1095 760M1085 690 1120 705M1085 727 1142 727 1150 752"/>
</g></g></svg>
</section>
<div class="vs"><svg class="ch"><use href="#cup"/></svg><i class="thumb"></i><svg class="ch"><use href="#cdn"/></svg></div>

<section class="cat">
<h2 class="ph pale">Catalog</h2>
<div class="ctools"><svg class="i"><use href="#cl"/></svg><i class="dn gray"></i><svg class="i"><use href="#cr"/></svg><svg class="i"><use href="#up"/></svg><svg class="i"><use href="#home"/></svg></div>
<div class="loc"><span>Location:</span><div class="locbox"><svg class="i"><use href="#pg"/></svg>differ.s</div></div>
<ul class="tree ctree">
<li class="c0"><i class="ex mi"></i><svg class="i"><use href="#fold"/></svg>GISD</li>
<li><i class="ex"></i><svg class="i"><use href="#fold"/></svg>g7</li>
<li><i class="ex"></i><svg class="i"><use href="#fold"/></svg>ne</li>
<li><i class="ex"></i><svg class="i"><use href="#fold"/></svg>qu</li>
<li><i class="ex"></i><svg class="i"><use href="#fold"/></svg>re</li>
<li><i class="ex"></i><svg class="i"><use href="#fold"/></svg>su</li>
<li><i class="ex"></i><svg class="i"><use href="#fold"/></svg>te</li>
<li><i class="ex"></i><svg class="i"><use href="#fold"/></svg>ts</li>
<li><i class="ex"></i><svg class="i"><use href="#db"/></svg>N</li>
<li><i class="ex"></i><svg class="i"><use href="#db"/></svg>N</li>
<li class="n"><svg class="i"><use href="#d3"/></svg>3d</li>
<li class="n"><svg class="i"><use href="#d3"/></svg>3d</li>
<li class="n"><svg class="i"><use href="#d3"/></svg>3d</li>
<li class="n"><svg class="i"><use href="#pg"/></svg>ac</li>
<li class="n"><svg class="i"><use href="#pg"/></svg>ar</li>
<li class="n"><svg class="i"><use href="#pg"/></svg>ar</li>
<li class="n"><svg class="i"><use href="#pt"/></svg>ci</li>
<li class="n"><svg class="i"><use href="#doc"/></svg>de</li>
<li class="n"><svg class="i"><use href="#pg"/></svg><span class="cs">di</span></li>
<li class="n"><svg class="i"><use href="#pg"/></svg>di</li>
<li class="n"><svg class="i"><use href="#pg"/></svg>di</li>
<li class="n"><svg class="i"><use href="#ln"/></svg>dc</li>
<li class="n"><svg class="i"><use href="#ln"/></svg>dr</li>
<li class="n"><svg class="i"><use href="#ln"/></svg>dr</li>
<li class="n"><svg class="i"><use href="#ln"/></svg>dr</li>
<li class="n"><svg class="i"><use href="#pt"/></svg>dr</li>
<li class="n"><svg class="i"><use href="#pg"/></svg>dr</li>
<li class="n"><svg class="i"><use href="#pt"/></svg>ex</li>
<li class="n"><svg class="i"><use href="#pt"/></svg>ex</li>
<li class="n"><svg class="i"><use href="#pt"/></svg>Ex</li>
<li class="n"><svg class="i"><use href="#pt"/></svg>Ex</li>
<li class="n"><svg class="i"><use href="#pt"/></svg>Ex</li>
<li class="n"><svg class="i"><use href="#pt"/></svg>Ex</li>
<li class="n"><svg class="i"><use href="#pt"/></svg>Ex</li>
<li class="n"><svg class="i"><use href="#pt"/></svg>Ex</li>
<li class="n"><svg class="i"><use href="#pt"/></svg>Ex</li>
<li class="n"><svg class="i"><use href="#pt"/></svg>F1</li>
<li class="n"><svg class="i"><use href="#doc"/></svg>fil</li>
<li class="n"><svg class="i"><use href="#pg"/></svg>fin</li>
</ul>
</section>
</main>
</div>

<div class="dlg" role="dialog" aria-label="Excel Creation">
<div class="dt"><svg class="i"><use href="#scr"/></svg><span>Excel Creation</span>
<button aria-label="Minimize"><svg class="w10" viewBox="0 0 11 11"><path d="M0 5.500h11"/></svg></button><button aria-label="Maximize"><svg class="w10" viewBox="0 0 11 11"><path d="M.5.5h10v10H.5Z"/></svg></button><button aria-label="Close"><svg class="w10" viewBox="0 0 11 11"><path d="m.5.5 10 10M10.500.5l-10 10"/></svg></button></div>
<div class="db">
<form class="params" id="params">
<div class="fields">
<div class="f"><label for="f1">原始点层</label><select id="f1" class="sel sunk"><option></option></select><button type="button" class="br act" aria-label="Browse"><svg class="i"><use href="#open"/></svg></button></div>
<div class="f"><label for="f2">原始面层</label><select id="f2" class="sel sunk"><option></option></select><button type="button" class="br act" aria-label="Browse"><svg class="i"><use href="#open"/></svg></button></div>
<div class="f"><label for="f3">输出点层</label><input id="f3"><button type="button" class="br act" aria-label="Browse"><svg class="i"><use href="#open"/></svg></button></div>
<div class="f"><label for="f4">原始<span>Excel</span>表</label><input id="f4"><button type="button" class="br" aria-label="Browse"><svg class="i"><use href="#open"/></svg></button></div>
<div class="f"><label for="f5">输出<span>Excel</span>表</label><input id="f5"><button type="button" class="br" aria-label="Browse"><svg class="i"><use href="#open"/></svg></button></div>
</div>
<div class="dsb"><svg class="ch"><use href="#cup"/></svg><svg class="ch"><use href="#cdn"/></svg></div>
</form>
<div class="help"><div class="ht"><h3>Excel Creation</h3><p>批量按name字段导出Excel</p></div><div class="dsb"><svg class="ch"><use href="#cup"/></svg><svg class="ch"><use href="#cdn"/></svg></div></div>
</div>
<div class="dfoot"><button class="ok">OK</button><button>Cancel</button><button class="env">Environments...</button><button class="hide">&lt;&lt; Hide Help</button><button class="th">Tool Help</button></div>
</div>

<div class="mark"></div>
<svg class="arrow" viewBox="0 0 50 34"><path d="M49 0Q30 10 16 21l-3-4L0 32l19-2-2-4Q32 14 49 0Z" fill="#119b99"/></svg>
<div class="gadget"><i></i></div>
<div class="wm">CSDN @GIS小天</div>
</body>
</html>
```
FILE: styles.css
```css
* { box-sizing: border-box; }
body { margin: 0; height: 100vh; overflow: hidden; position: relative; font: 13px/16px "Open Sans", "Noto Sans", "Noto Sans CJK SC", sans-serif; color: #000; background: #f0f0f0; }
button, select, input { font: inherit; color: inherit; margin: 0; }
button { padding: 0; border: 0; background: none; white-space: nowrap; }
i { font-style: normal; flex: none; }
.sprite { position: absolute; width: 0; height: 0; }
.i { width: 16px; height: 16px; flex: none; fill: none; stroke: #b4b4b4; }
.i.w { width: 18px; }
.k { color: #111; }

.app { height: 100%; display: grid; grid-template-rows: auto minmax(0, 1fr); }
.bars { display: grid; grid-template-rows: 23px 27px 26px 26px 26px 27px 28px 28px 29px 27px; background: linear-gradient(90deg, #f0f0f0 20%, #fafafa); overflow: hidden; }
.title { background: #fff; color: #999; display: flex; align-items: center; gap: 5px; padding-left: 2px; font-size: 12px; }
.menu { display: flex; align-items: center; padding-left: 12px; gap: 14px; }
.row { display: flex; align-items: center; min-width: 0; }
.tb { display: flex; align-items: center; flex: none; height: 26px; border-radius: 3px; background: linear-gradient(#fcfcfc, #f1f1f1); }
.gr { width: 3px; height: 15px; margin: 0 2px; background: repeating-linear-gradient(#bbb 0 3px, transparent 3px 5px); }
.b { width: 22px; height: 22px; flex: none; display: grid; place-items: center; border: 1px solid transparent; }
.on { background: #dceaf6; border-color: #0078d7; }
.ong { background: #dce6ef; border-color: #a3b4c4; }
.s { width: 6px; height: 16px; background: linear-gradient(#bdbdbd, #bdbdbd) center / 1px 100% no-repeat; }
.c { width: 11px; height: 22px; display: grid; place-items: center; }
.c16 { width: 16px; }
.c::before, .dn { content: ""; width: 0; height: 0; border: 3px solid transparent; border-top: 3px solid #000; border-bottom: 0; }
.c.off::before { border-top-color: #999; }
.dn { display: inline-block; }
.dn.upw { border-top: 0; border-bottom: 3px solid #000; }
.dn.gray { border-top-color: #666; }
.t { flex: 1 1 0; min-width: 0; text-align: left; padding-left: 4px; display: flex; align-items: center; gap: 2px; }
.t.cn { font-size: 12px; padding-left: 6px; }
.ov { width: 10px; height: 26px; flex: none; margin-left: auto; background: linear-gradient(#000, #000) 2px 17px / 6px 1px no-repeat, linear-gradient(#ededed, #9c9c9c); display: grid; place-items: end center; padding-bottom: 2px; }
.ov::after { content: ""; border: 3px solid transparent; border-top: 4px solid #000; border-bottom: 0; }

.m2 { margin-left: 2px; } .m4 { margin-left: 4px; } .m22 { margin-left: 22px; } .m70 { margin-left: 70px; }
.m80 { margin-left: 80px; } .m92 { margin-left: 92px; } .m96 { margin-left: 96px; } .m169 { margin-left: 169px; }
.m228 { margin-left: 228px; } .m338 { margin-left: 338px; } .m827 { margin-left: 827px; }
.rest { flex: 1 0 0; min-width: 0; overflow: hidden; }
.w46 { width: 46px; } .w60 { width: 60px; } .w66 { width: 66px; } .w80 { width: 79px; } .w101 { width: 101px; }
.w105 { flex: 0 0 105px; } .w148 { width: 148px; } .w171 { width: 171px; } .w180 { width: 180px; }
.w179 { width: 179px; } .w185 { width: 185px; } .w191 { width: 191px; } .w234 { width: 234px; } .w288 { width: 289px; }
.w384 { width: 384px; } .w393 { width: 393px; } .w403 { width: 403px; } .w419 { width: 419px; } .w482 { width: 482px; } .w689 { width: 689px; }

.sel { appearance: none; height: 20px; flex: none; border: 1px solid #7a7a7a; border-radius: 0; padding: 0 2px; background: #fff url("data:image/svg+xml,%3Csvg xmlns='http://www.w3.org/2000/svg' width='9' height='6'%3E%3Cpath d='m.5.5 4 4 4-4' fill='none' stroke='%23555'/%3E%3C/svg%3E") right 4px center no-repeat; }
.mono { font: 10px/14px "DejaVu Sans Mono", monospace; }
.lite { border-color: #bbb; color: #444; }
.dis { height: 21px; background-color: #ccc; border-color: #bbb; color: #777; opacity: 1; }
.w66 { height: 25px; }
.flat { height: 22px; border: 0; background: #fff url("data:image/svg+xml,%3Csvg xmlns='http://www.w3.org/2000/svg' width='7' height='4'%3E%3Cpath d='M0 0h7L3.500 4Z'/%3E%3C/svg%3E") right 2px center no-repeat; }
.icosel { display: flex; align-items: center; height: 20px; flex: none; border: 1px solid #7a7a7a; background: #fff; padding-left: 2px; }
.bare { flex: 1; border: 0; height: 18px; font-size: 12px; }
.old { width: 179px; border: 2px solid #777; border-right-color: #ddd; border-bottom-color: #ddd; height: 20px; padding: 0; }
.olds { height: 16px; font-size: 13px; background: url("data:image/svg+xml,%3Csvg xmlns='http://www.w3.org/2000/svg' width='16' height='16'%3E%3Cpath d='M0 0h16v16H0Z' fill='%23f0f0f0'/%3E%3Cpath d='M15.500 0v15.500H0' fill='none' stroke='%23696969'/%3E%3Cpath d='M4 6h8l-4 4Z'/%3E%3C/svg%3E") right / 16px no-repeat; }
.txt { height: 18px; width: 60px; border: 1px solid #666; padding: 0 2px; background: #fff; }
.spin { width: 45px; height: 20px; border-right: 0; }
.spb { display: grid; width: 16px; height: 20px; border: 1px solid #666; border-left: 0; }
.spb button { display: grid; place-items: center; border: 1px solid #aaa; background: #f0f0f0; min-height: 0; }
.fmt { font: bold 13px/16px "Liberation Serif", serif; }
.it { font-style: italic; } .un { text-decoration: underline; }
.links { display: flex; align-items: center; gap: 8px; font-size: 12px; padding-left: 2px; }
.bar { width: 1px; height: 16px; background: #bbb; margin: 0 -1px 0 -2px; }

.work { display: grid; grid-template-columns: 165px 339px minmax(0, 1fr) 16px 117px; min-height: 0; }
.box { margin-left: 5px; }
.panel { display: flex; flex-direction: column; min-width: 0; min-height: 0; }
.ph { margin: 0; height: 23px; flex: none; font: inherit; display: flex; align-items: center; gap: 5px; padding: 0 4px; background: linear-gradient(90deg, #bfcddc, #d8e5f3); white-space: nowrap; }
.ph .p:first-of-type { margin-left: auto; }
.p { width: 10px; height: 10px; fill: none; flex: none; }
.pale { background: #bfcddc; }
.ptools { height: 25px; flex: none; display: flex; align-items: center; padding-left: 4px; background: #f7f7f7; }
.tree { margin: 0; padding: 0; list-style: none; }
.list { flex: 1; min-height: 0; background: #fff; border: 1px solid #828790; border-bottom: 0; overflow: hidden; }
.tree li { display: flex; align-items: center; height: 20px; white-space: nowrap; }
.ex { width: 9px; height: 9px; border: 1px solid #919191; background: linear-gradient(#2a4a9c, #2a4a9c) center / 5px 1px no-repeat, linear-gradient(#2a4a9c, #2a4a9c) center / 1px 5px no-repeat, #fff; }
.ex.mi { background: linear-gradient(#2a4a9c, #2a4a9c) center / 5px 1px no-repeat, #fff; }
.l0 { padding-left: 8px; gap: 5px; }
.l0 .i { margin-left: 1px; }
.l1 { padding-left: 27px; }
.l1 label { display: flex; align-items: center; gap: 6px; padding-left: 8px; }
.l1 input { appearance: none; width: 11px; height: 11px; border: 1px solid #000; background: #fff url("data:image/svg+xml,%3Csvg xmlns='http://www.w3.org/2000/svg' width='9' height='9'%3E%3Cpath d='m1 4 2 3 5-6' fill='none' stroke='%23000' stroke-width='1.800'/%3E%3C/svg%3E"); }
.seld { background: #0078d7; color: #fff; padding: 2px; }
.l2 { padding-left: 59px; }
.swatch { width: 15px; height: 11px; border: 1px solid #777; background: #c9f2d0; }
.tools li { padding-left: 8px; }
.tools li .i { margin: 0 5px 0 6px; }
.tools .r0 { padding-left: 5px; }
.tools .r0 .i { margin: 0 4px 0 0; }
.tools .r2 { padding-left: 36px; }
.hov { background: #f0f0f0; padding: 2px; margin: 0 -2px; }
.map { margin: 1px 0 0 4px; border: 2px solid #696969; border-right: 1px solid #ddd; border-bottom: 0; background: #fff; overflow: hidden; }
.mapsvg { display: block; width: 100%; height: 729px; }
.vs { margin-top: 1px; background: #f0f0f0; display: flex; flex-direction: column; align-items: center; border-top: 1px solid #696969; color: #555; }
.ch { width: 12px; height: 8px; fill: none; flex: none; }
.vs .ch { width: 8px; height: 6px; margin: 6px 0 5px; }
.thumb { flex: 1; width: 14px; background: #cdcdcd; }
.cat { margin-left: 5px; overflow: hidden; display: flex; flex-direction: column; background: #f0f0f0; }
.ctools { height: 25px; flex: none; display: flex; align-items: center; gap: 8px; padding-left: 6px; background: #fafafa; }
.loc { height: 24px; flex: none; display: flex; align-items: center; gap: 5px; font-size: 11px; padding-left: 2px; }
.locbox { display: flex; align-items: center; gap: 4px; flex: none; width: 80px; height: 21px; border: 1px solid #777; background: #fff; padding-left: 2px; }
.ctree { flex: 1; min-height: 0; background: #fff; border: 2px solid #696969; border-width: 2px 0 0 2px; overflow: hidden; }
.ctree li { height: 17px; padding-left: 64px; gap: 5px; }
.ctree .i { margin-left: 1px; }
.ctree .c0 { padding-left: 45px; }
.ctree .n { padding-left: 78px; }
.cs { background: #f0f0f0; flex: 1; }

.dlg { position: absolute; left: 245px; top: 501px; width: 920px; height: 493px; display: flex; flex-direction: column; background: #f0f0f0; border: 1px solid #6d6d6d; box-shadow: 0 3px 14px rgba(0,0,0,.45); }
.dt { height: 30px; flex: none; display: flex; align-items: center; background: #fff; padding-left: 8px; }
.dt span { flex: 1; padding-left: 5px; }
.dt button { width: 45px; height: 30px; }
.w10 { width: 11px; height: 11px; fill: none; stroke: #000; }
.db { flex: 1; min-height: 0; display: grid; grid-template-columns: minmax(0, 1fr) 245px; gap: 3px; padding-left: 1px; border-bottom: 1px solid #fff; }
.params, .help { display: flex; min-width: 0; border: 2px solid #777; border-color: #777 #e3e3e3 #e3e3e3 #777; }
.params { border-left-width: 1px; }
.help { background: #fff; }
.fields { flex: 1; padding: 12px 12px 0 6px; display: grid; gap: 4px; align-content: start; }
.f { display: grid; grid-template: 16px 22px / minmax(0, 1fr) 22px; column-gap: 10px; align-items: center; padding-left: 13px; }
.f label { grid-column: 1 / -1; margin-left: -13px; font: 12px/16px "Liberation Serif", "Noto Sans CJK SC", serif; display: flex; align-items: center; }
.f label::before { content: ""; width: 7px; height: 7px; margin-right: 6px; border-radius: 50%; background: #00f000; box-shadow: 1px 1px 0 #175a17; }
.f label span { font: 10px/16px "Liberation Mono", monospace; }
.f input { height: 20px; min-width: 0; width: 100%; border: 1px solid #7a7a7a; background: #fff; }
.sunk { width: 100%; height: 20px; border: 2px solid #777; border-width: 2px 1px 1px 2px; border-color: #777 #fff #fff #777; background: #fff url("data:image/svg+xml,%3Csvg xmlns='http://www.w3.org/2000/svg' width='16' height='17'%3E%3Cpath d='M0 0h16v17H0Z' fill='%23f0f0f0'/%3E%3Cpath d='M15.500 0v16.500H0' fill='none' stroke='%23696969'/%3E%3Cpath d='M4 7h8l-4 4Z'/%3E%3C/svg%3E") right center no-repeat; }
.br { width: 22px; height: 24px; display: grid; place-items: center; border: 1px solid #adadad; background: #e1e1e1; }
.br.act { border: 2px solid #0078d7; }
.dsb { width: 16px; flex: none; background: #f7f7f7; color: #bbb; display: flex; flex-direction: column; align-items: center; justify-content: space-between; padding: 17px 0 16px; }
.ht { flex: 1; padding: 8px 0 0 16px; font: 13px/20px "Liberation Sans", "Noto Sans CJK SC", sans-serif; }
.ht h3 { margin: 0; font-size: 16px; }
.ht p { margin: 16px 0 0; }
.dfoot { height: 44px; flex: none; display: flex; align-items: center; gap: 7px; padding-left: 312px; font-size: 11px; }
.dfoot button { width: 73px; height: 21px; border: 1px solid #adadad; background: #e1e1e1; }
.dfoot .ok { border: 2px solid #0078d7; }
.dfoot .env { width: 88px; }
.dfoot .hide { width: 96px; }
.dfoot .th { width: 100px; margin-left: 16px; }

.mark { position: absolute; left: 167px; top: 407px; width: 238px; height: 69px; border: 1px solid #f03c3c; pointer-events: none; }
.arrow { position: absolute; left: 341px; top: 480px; width: 50px; height: 34px; pointer-events: none; }
.gadget { position: absolute; left: 0; top: 947px; width: 11px; height: 52px; border-radius: 0 5px 0 0; background: #4b4f5c; border: 1px solid #33363f; padding: 6px 2px 2px; }
.gadget i { display: block; height: 100%; background: repeating-linear-gradient(#23252c 0 2px, transparent 2px 4px); }
.wm { position: absolute; left: 1356px; top: 974px; font: 14px/18px "Liberation Sans", "Noto Sans CJK SC", sans-serif; color: rgba(110,110,110,.75); text-shadow: 0 0 2px #fff; pointer-events: none; white-space: nowrap; }
```
